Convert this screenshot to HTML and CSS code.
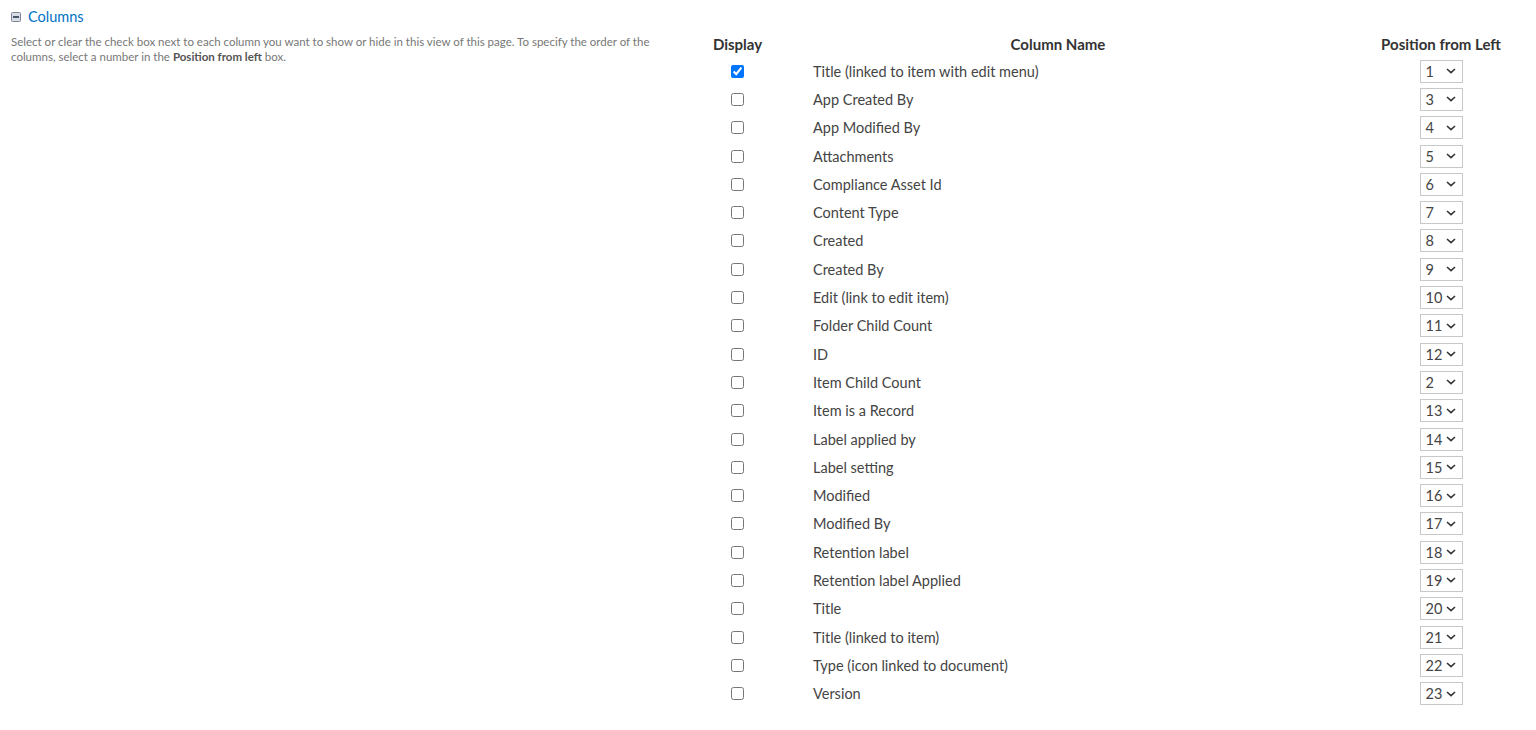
FILE: index.html
```html
<!DOCTYPE html>
<html>
<head>
<meta charset="utf-8">
<link rel="stylesheet" href="styles.css">
</head>
<body>
<div class="page">
  <div class="intro">
    <div class="section-head">
      <svg class="toggle" width="10" height="10" viewBox="0 0 10 10">
        <rect x="0.5" y="0.5" width="9" height="9" rx="1" fill="#d8dde6" stroke="#7a8699"/>
        <rect x="2" y="4" width="6" height="2" fill="#4a5568"/>
      </svg>
      <a class="section-title">Columns</a>
    </div>
    <p class="desc">Select or clear the check box next to each column you want to show or hide in this view of this page. To specify the order of the columns, select a number in the <b>Position from left</b> box.</p>
  </div>
  <div class="cols">
    <div class="hd">Display</div>
    <div class="hd">Column Name</div>
    <div class="hd">Position from Left</div>

    <div class="cell cell-check"><input type="checkbox" checked></div>
    <div class="cell cell-name">Title (linked to item with edit menu)</div>
    <div class="cell cell-pos"><span class="sel"><span class="num">1</span><svg class="chev" width="10" height="6" viewBox="0 0 10 6"><path d="M1 1l4 3.6L9 1" fill="none" stroke="#333" stroke-width="1.6"/></svg></span></div>

    <div class="cell cell-check"><input type="checkbox"></div>
    <div class="cell cell-name">App Created By</div>
    <div class="cell cell-pos"><span class="sel"><span class="num">3</span><svg class="chev" width="10" height="6" viewBox="0 0 10 6"><path d="M1 1l4 3.6L9 1" fill="none" stroke="#333" stroke-width="1.6"/></svg></span></div>

    <div class="cell cell-check"><input type="checkbox"></div>
    <div class="cell cell-name">App Modified By</div>
    <div class="cell cell-pos"><span class="sel"><span class="num">4</span><svg class="chev" width="10" height="6" viewBox="0 0 10 6"><path d="M1 1l4 3.6L9 1" fill="none" stroke="#333" stroke-width="1.6"/></svg></span></div>

    <div class="cell cell-check"><input type="checkbox"></div>
    <div class="cell cell-name">Attachments</div>
    <div class="cell cell-pos"><span class="sel"><span class="num">5</span><svg class="chev" width="10" height="6" viewBox="0 0 10 6"><path d="M1 1l4 3.6L9 1" fill="none" stroke="#333" stroke-width="1.6"/></svg></span></div>

    <div class="cell cell-check"><input type="checkbox"></div>
    <div class="cell cell-name">Compliance Asset Id</div>
    <div class="cell cell-pos"><span class="sel"><span class="num">6</span><svg class="chev" width="10" height="6" viewBox="0 0 10 6"><path d="M1 1l4 3.6L9 1" fill="none" stroke="#333" stroke-width="1.6"/></svg></span></div>

    <div class="cell cell-check"><input type="checkbox"></div>
    <div class="cell cell-name">Content Type</div>
    <div class="cell cell-pos"><span class="sel"><span class="num">7</span><svg class="chev" width="10" height="6" viewBox="0 0 10 6"><path d="M1 1l4 3.6L9 1" fill="none" stroke="#333" stroke-width="1.6"/></svg></span></div>

    <div class="cell cell-check"><input type="checkbox"></div>
    <div class="cell cell-name">Created</div>
    <div class="cell cell-pos"><span class="sel"><span class="num">8</span><svg class="chev" width="10" height="6" viewBox="0 0 10 6"><path d="M1 1l4 3.6L9 1" fill="none" stroke="#333" stroke-width="1.6"/></svg></span></div>

    <div class="cell cell-check"><input type="checkbox"></div>
    <div class="cell cell-name">Created By</div>
    <div class="cell cell-pos"><span class="sel"><span class="num">9</span><svg class="chev" width="10" height="6" viewBox="0 0 10 6"><path d="M1 1l4 3.6L9 1" fill="none" stroke="#333" stroke-width="1.6"/></svg></span></div>

    <div class="cell cell-check"><input type="checkbox"></div>
    <div class="cell cell-name">Edit (link to edit item)</div>
    <div class="cell cell-pos"><span class="sel"><span class="num">10</span><svg class="chev" width="10" height="6" viewBox="0 0 10 6"><path d="M1 1l4 3.6L9 1" fill="none" stroke="#333" stroke-width="1.6"/></svg></span></div>

    <div class="cell cell-check"><input type="checkbox"></div>
    <div class="cell cell-name">Folder Child Count</div>
    <div class="cell cell-pos"><span class="sel"><span class="num">11</span><svg class="chev" width="10" height="6" viewBox="0 0 10 6"><path d="M1 1l4 3.6L9 1" fill="none" stroke="#333" stroke-width="1.6"/></svg></span></div>

    <div class="cell cell-check"><input type="checkbox"></div>
    <div class="cell cell-name">ID</div>
    <div class="cell cell-pos"><span class="sel"><span class="num">12</span><svg class="chev" width="10" height="6" viewBox="0 0 10 6"><path d="M1 1l4 3.6L9 1" fill="none" stroke="#333" stroke-width="1.6"/></svg></span></div>

    <div class="cell cell-check"><input type="checkbox"></div>
    <div class="cell cell-name">Item Child Count</div>
    <div class="cell cell-pos"><span class="sel"><span class="num">2</span><svg class="chev" width="10" height="6" viewBox="0 0 10 6"><path d="M1 1l4 3.6L9 1" fill="none" stroke="#333" stroke-width="1.6"/></svg></span></div>

    <div class="cell cell-check"><input type="checkbox"></div>
    <div class="cell cell-name">Item is a Record</div>
    <div class="cell cell-pos"><span class="sel"><span class="num">13</span><svg class="chev" width="10" height="6" viewBox="0 0 10 6"><path d="M1 1l4 3.6L9 1" fill="none" stroke="#333" stroke-width="1.6"/></svg></span></div>

    <div class="cell cell-check"><input type="checkbox"></div>
    <div class="cell cell-name">Label applied by</div>
    <div class="cell cell-pos"><span class="sel"><span class="num">14</span><svg class="chev" width="10" height="6" viewBox="0 0 10 6"><path d="M1 1l4 3.6L9 1" fill="none" stroke="#333" stroke-width="1.6"/></svg></span></div>

    <div class="cell cell-check"><input type="checkbox"></div>
    <div class="cell cell-name">Label setting</div>
    <div class="cell cell-pos"><span class="sel"><span class="num">15</span><svg class="chev" width="10" height="6" viewBox="0 0 10 6"><path d="M1 1l4 3.6L9 1" fill="none" stroke="#333" stroke-width="1.6"/></svg></span></div>

    <div class="cell cell-check"><input type="checkbox"></div>
    <div class="cell cell-name">Modified</div>
    <div class="cell cell-pos"><span class="sel"><span class="num">16</span><svg class="chev" width="10" height="6" viewBox="0 0 10 6"><path d="M1 1l4 3.6L9 1" fill="none" stroke="#333" stroke-width="1.6"/></svg></span></div>

    <div class="cell cell-check"><input type="checkbox"></div>
    <div class="cell cell-name">Modified By</div>
    <div class="cell cell-pos"><span class="sel"><span class="num">17</span><svg class="chev" width="10" height="6" viewBox="0 0 10 6"><path d="M1 1l4 3.6L9 1" fill="none" stroke="#333" stroke-width="1.6"/></svg></span></div>

    <div class="cell cell-check"><input type="checkbox"></div>
    <div class="cell cell-name">Retention label</div>
    <div class="cell cell-pos"><span class="sel"><span class="num">18</span><svg class="chev" width="10" height="6" viewBox="0 0 10 6"><path d="M1 1l4 3.6L9 1" fill="none" stroke="#333" stroke-width="1.6"/></svg></span></div>

    <div class="cell cell-check"><input type="checkbox"></div>
    <div class="cell cell-name">Retention label Applied</div>
    <div class="cell cell-pos"><span class="sel"><span class="num">19</span><svg class="chev" width="10" height="6" viewBox="0 0 10 6"><path d="M1 1l4 3.6L9 1" fill="none" stroke="#333" stroke-width="1.6"/></svg></span></div>

    <div class="cell cell-check"><input type="checkbox"></div>
    <div class="cell cell-name">Title</div>
    <div class="cell cell-pos"><span class="sel"><span class="num">20</span><svg class="chev" width="10" height="6" viewBox="0 0 10 6"><path d="M1 1l4 3.6L9 1" fill="none" stroke="#333" stroke-width="1.6"/></svg></span></div>

    <div class="cell cell-check"><input type="checkbox"></div>
    <div class="cell cell-name">Title (linked to item)</div>
    <div class="cell cell-pos"><span class="sel"><span class="num">21</span><svg class="chev" width="10" height="6" viewBox="0 0 10 6"><path d="M1 1l4 3.6L9 1" fill="none" stroke="#333" stroke-width="1.6"/></svg></span></div>

    <div class="cell cell-check"><input type="checkbox"></div>
    <div class="cell cell-name">Type (icon linked to document)</div>
    <div class="cell cell-pos"><span class="sel"><span class="num">22</span><svg class="chev" width="10" height="6" viewBox="0 0 10 6"><path d="M1 1l4 3.6L9 1" fill="none" stroke="#333" stroke-width="1.6"/></svg></span></div>

    <div class="cell cell-check"><input type="checkbox"></div>
    <div class="cell cell-name">Version</div>
    <div class="cell cell-pos"><span class="sel"><span class="num">23</span><svg class="chev" width="10" height="6" viewBox="0 0 10 6"><path d="M1 1l4 3.6L9 1" fill="none" stroke="#333" stroke-width="1.6"/></svg></span></div>
  </div>
</div>
</body>
</html>
```
FILE: styles.css
```css
html, body {
  margin: 0;
  background: #fff;
}
body {
  font-family: "Segoe UI", Lato, "Open Sans", sans-serif;
  color: #444;
}
.page {
  display: flex;
  align-items: flex-start;
}
.intro {
  width: 705px;
  flex: none;
  padding: 8px 0 0 11px;
  box-sizing: border-box;
}
.section-head {
  display: flex;
  align-items: center;
  height: 17px;
}
.toggle {
  margin-right: 7px;
  flex: none;
}
.section-title {
  color: #0072c6;
  font-size: 14.5px;
  line-height: 17px;
}
.desc {
  margin: 9px 0 0 0;
  width: 658px;
  font-size: 11.5px;
  line-height: 15px;
  color: #777;
}
.desc b {
  color: #555;
}
.cols {
  display: grid;
  grid-template-columns: 65px 576px 190px;
  grid-auto-rows: 28.3px;
  grid-template-rows: 25px;
  margin-top: 32px;
}
.hd {
  font-weight: bold;
  font-size: 15px;
  color: #333;
  text-align: center;
  line-height: 24px;
}
.cell {
  display: flex;
  align-items: center;
  font-size: 14.5px;
}
.cell-check {
  justify-content: center;
}
.cell-check input {
  margin: 0;
  width: 13px;
  height: 13px;
  accent-color: #0075ff;
}
.cell-name {
  padding-left: 43px;
}
.cell-pos {
  justify-content: center;
}
.sel {
  display: inline-flex;
  align-items: center;
  width: 43px;
  height: 23px;
  box-sizing: border-box;
  border: 1px solid #c8c8c8;
  padding-left: 5px;
  font-size: 14.5px;
  color: #444;
}
.num {
  flex: 1;
  padding-right: 3px;
}
.chev {
  flex: none;
  margin-right: 6px;
}
```
